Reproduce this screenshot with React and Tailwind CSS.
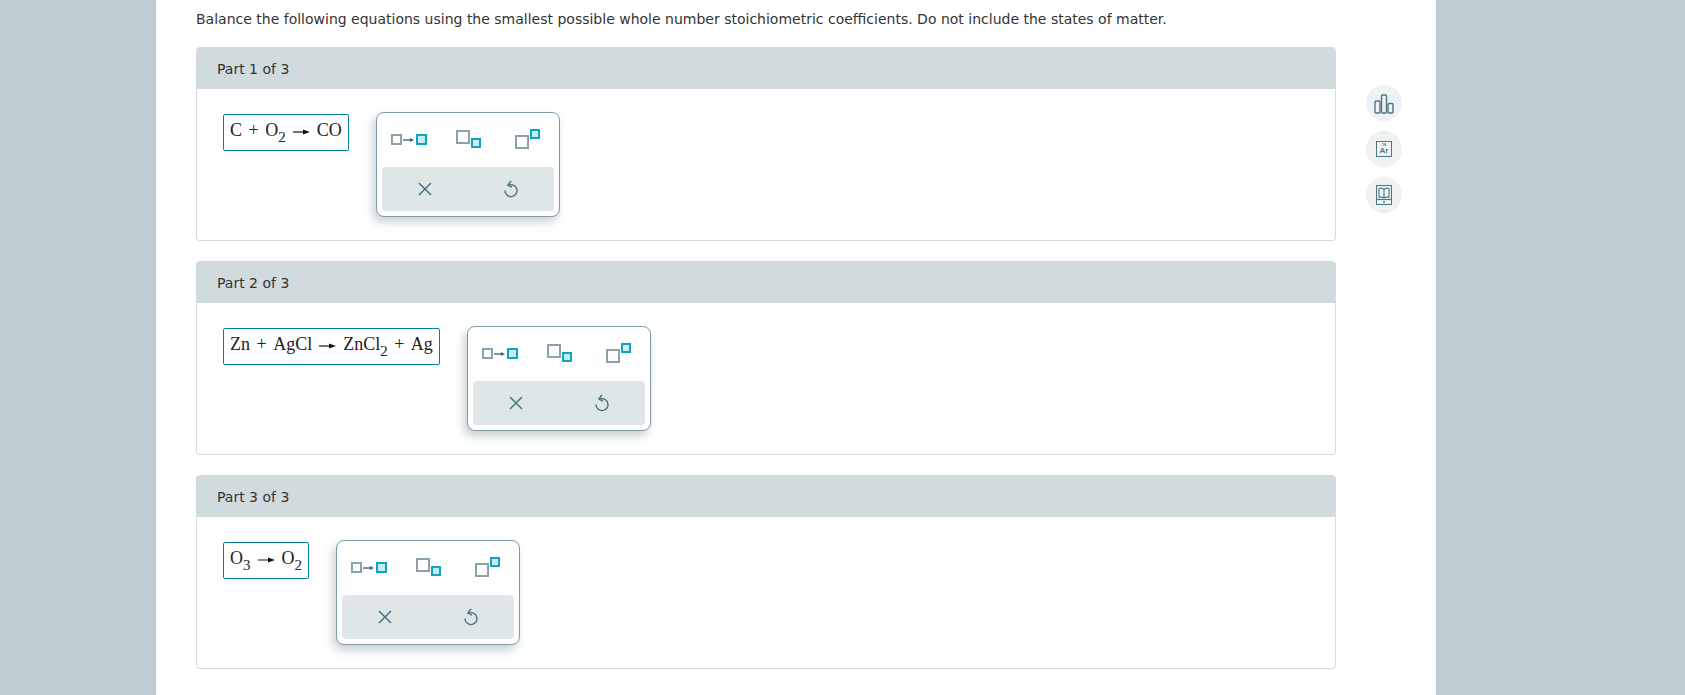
import React from "react";

const Sub = ({ children }) => (
  <sub className="text-[15px] leading-none relative top-[6px] align-baseline">{children}</sub>
);

const Plus = () => <span className="mx-[6.5px]">+</span>;

function Arrow() {
  return (
    <svg className="inline-block mx-[7px] align-baseline" width="17" height="8" viewBox="0 0 17 8">
      <path d="M0 4H11" stroke="#444" strokeWidth="1.3" />
      <path d="M10 1.5L17 4L10 6.5Z" fill="#111" />
    </svg>
  );
}

const parts = [
  {
    id: 1,
    eq: (
      <>
        C<Plus />O<Sub>2</Sub>
        <Arrow />
        CO
      </>
    ),
  },
  {
    id: 2,
    eq: (
      <>
        Zn<Plus />AgCl
        <Arrow />
        ZnCl<Sub>2</Sub><Plus />Ag
      </>
    ),
  },
  {
    id: 3,
    eq: (
      <>
        O<Sub>3</Sub>
        <Arrow />
        O<Sub>2</Sub>
      </>
    ),
  },
];

const GrayBox = ({ className }) => (
  <span className={`block border-2 border-[#8ba2ac] bg-white ${className}`} />
);

const TealBox = ({ className }) => (
  <span className={`block border-2 border-[#11a3bd] bg-[#c5ecf0] ${className}`} />
);

const Toolbox = () => (
  <div className="w-[184px] h-[105px] shrink-0 -mt-[2px] ml-[27px] rounded-lg border border-[#7d99a3] bg-white p-[5px] shadow-[-3px_5px_10px_rgba(70,100,110,0.3)]">
    <div className="h-[49px] flex items-start">
      {/* reaction arrow */}
      <button className="w-[57px] flex items-center pl-[9px] pt-[16px]">
        <GrayBox className="w-[11px] h-[11px]" />
        <svg width="13" height="6" viewBox="0 0 13 6" className="mr-[1px]">
          <path d="M1 3H9" stroke="#4e7482" strokeWidth="1.5" />
          <path d="M8 1L12 3L8 5Z" fill="#3f6472" />
        </svg>
        <TealBox className="w-[11px] h-[11px]" />
      </button>
      {/* subscript */}
      <button className="w-[57px] flex items-start pl-[17px] pt-[12px]">
        <GrayBox className="w-[14px] h-[14px]" />
        <TealBox className="w-[10px] h-[10px] ml-[1px] mt-[8px]" />
      </button>
      {/* superscript */}
      <button className="w-[57px] flex items-start pl-[19px] pt-[11px]">
        <GrayBox className="w-[14px] h-[14px] mt-[6px]" />
        <TealBox className="w-[10px] h-[10px] ml-[1px]" />
      </button>
    </div>
    <div className="h-[44px] rounded bg-[#dfe6e8] flex items-center text-[#4a7180]">
      <button className="w-[86px] flex justify-center">
        <svg width="16" height="16" viewBox="0 0 16 16" fill="none" stroke="currentColor" strokeWidth="1.5">
          <path d="M2 2L14 14M14 2L2 14" />
        </svg>
      </button>
      <button className="w-[86px] flex justify-center">
        <svg width="16" height="18" viewBox="0 0 16 18" fill="none" stroke="currentColor" strokeWidth="1.4">
          <path d="M5.5 5.2A6 6 0 1 1 2 10.5" />
          <path d="M8 1L4.8 5L9 7.2" />
        </svg>
      </button>
    </div>
  </div>
);

const Part = ({ id, eq }) => (
  <section className="h-[194px] rounded border border-[#d3dcdf] border-t-0 bg-white overflow-hidden">
    <div className="h-[42px] bg-[#d1dadd] flex items-center pl-[20px] pt-[2px] text-[14px] text-[#333]">
      Part {id} of 3
    </div>
    <div className="flex items-start pt-[25px] pl-[26px]">
      <div className="h-[37px] flex items-center px-[6px] pb-[4px] rounded-[2px] border border-[#00819a] font-['Liberation_Serif',serif] text-[18px] whitespace-nowrap text-[#222]">
        <span>{eq}</span>
      </div>
      <Toolbox />
    </div>
  </section>
);

const ToolIcon = ({ children }) => (
  <button className="w-[36px] h-[36px] rounded-full bg-[#eef2f3] flex items-center justify-center">
    {children}
  </button>
);

export default function App() {
  return (
    <div className="w-[1685px] h-[695px] overflow-hidden bg-[#c0cdd3] pl-[156px] font-['DejaVu_Sans',sans-serif]">
      <div className="w-[1280px] h-full bg-white flex pl-[40px]">
        <main className="w-[1140px]">
          <p className="h-[47px] pt-[10px] text-[14px] leading-[18px] text-[#333]">
            Balance the following equations using the smallest possible whole number stoichiometric coefficients. Do not include the states of matter.
          </p>
          <div className="flex flex-col gap-[20px]">
            {parts.map((p) => (
              <Part key={p.id} {...p} />
            ))}
          </div>
        </main>
        <aside className="ml-[30px] pt-[85px] flex flex-col gap-[10px]">
          <ToolIcon>
            <svg width="20" height="20" viewBox="0 0 20 20" fill="none" stroke="#4e7887" strokeWidth="1.4" className="mt-[1px]">
              <rect x="1" y="7" width="5" height="12" rx="1" />
              <rect x="7.5" y="1" width="5" height="18" rx="1" />
              <rect x="14" y="9.5" width="5" height="9.5" rx="1" />
            </svg>
          </ToolIcon>
          <ToolIcon>
            <span className="relative w-[16px] h-[16px] border border-[#4e7887] text-[#4e7887] font-['Liberation_Sans',sans-serif] font-bold text-[8px] leading-none flex items-end justify-center pb-[1px]">
              Ar
              <span className="absolute top-[1px] inset-x-0 text-center text-[4px] leading-none font-bold">18</span>
            </span>
          </ToolIcon>
          <ToolIcon>
            <svg width="16" height="20" viewBox="0 0 16 20" fill="none" stroke="#4e7887" strokeWidth="1.1">
              <rect x="0.5" y="0.5" width="15" height="19" />
              <path d="M0.5 14.5H15.5" />
              <path d="M8 4.5C6.5 3 4.5 3 3 3.5V12.5C4.5 12 6.5 12 8 13C9.5 12 11.5 12 13 12.5V3.5C11.5 3 9.5 3 8 4.5ZM8 4.5V13" />
              <path d="M8 16V18M7 17H9" />
            </svg>
          </ToolIcon>
        </aside>
      </div>
    </div>
  );
}
